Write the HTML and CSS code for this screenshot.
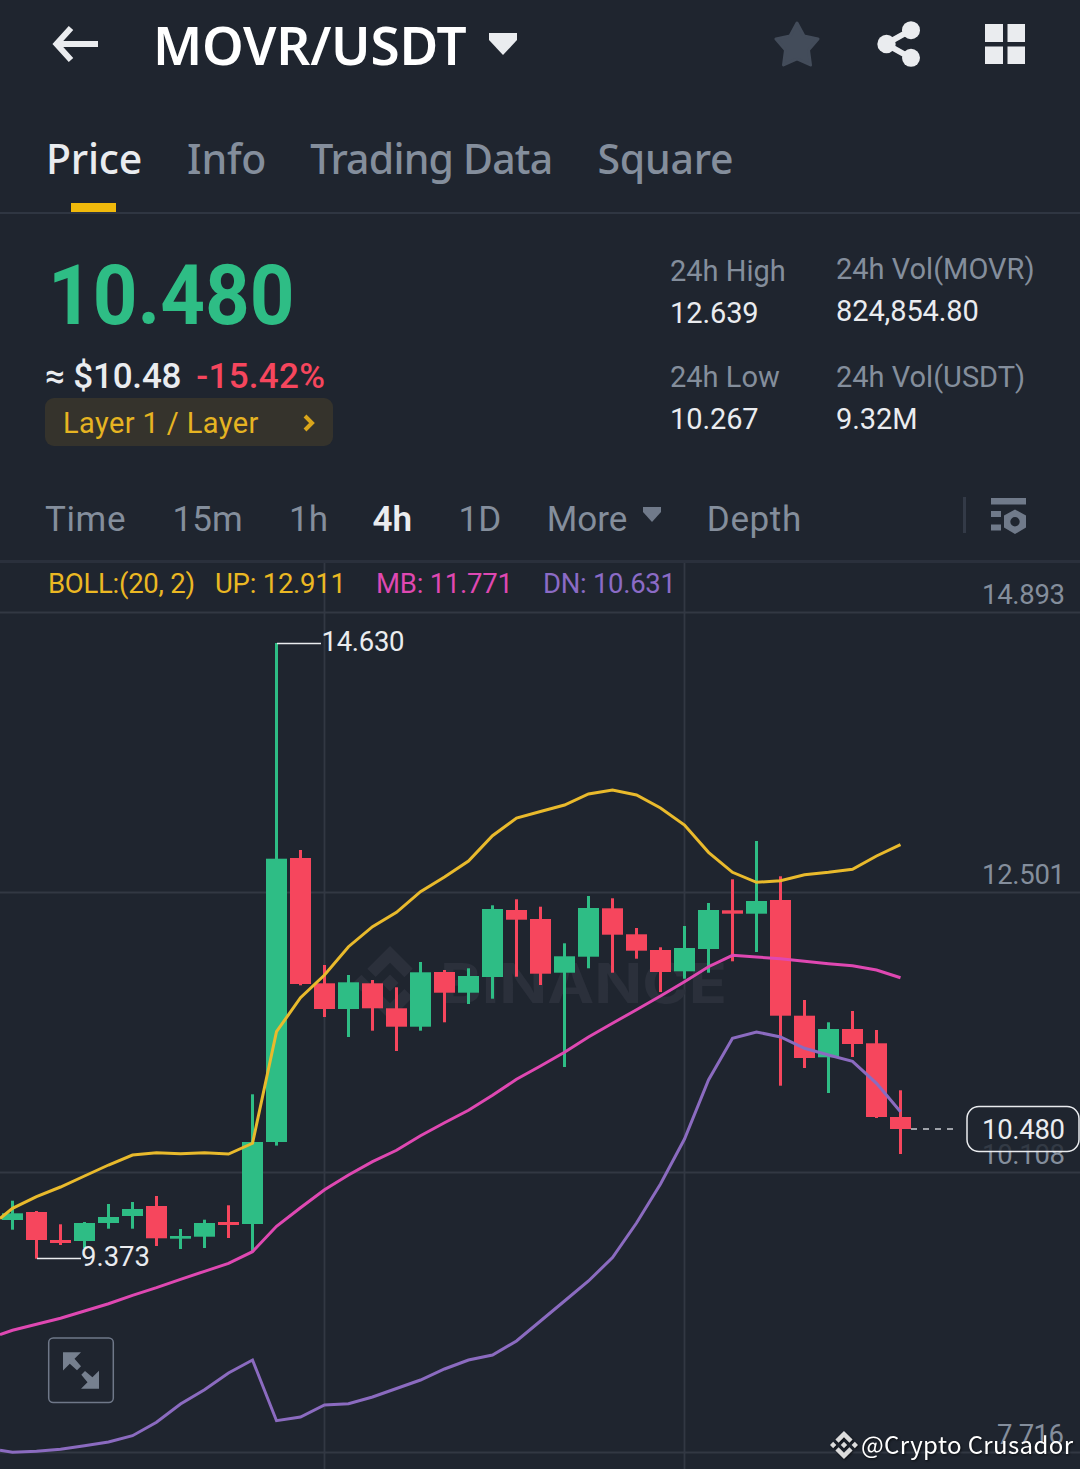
FILE: index.html
```html
<!DOCTYPE html>
<html lang="en">
<head>
    <meta charset="UTF-8">
    <meta name="viewport" content="width=device-width, initial-scale=1.0">
    <title>MOVR/USDT</title>
    <link rel="stylesheet" href="styles.css">
</head>
<body>
    <header class="header">
        <svg class="back" width="48" height="40" viewBox="0 0 48 40">
            <path d="M21 4 L6.500 20 L21 36 M6 20 H48" fill="none" stroke="#eaecef" stroke-width="6"/>
        </svg>
        <h1 class="title">MOVR/USDT</h1>
        <svg class="title-caret" width="28" height="22" viewBox="0 0 28 22">
            <path d="M0 0H28V7L14 22L0 7Z" fill="#eaecef"/>
        </svg>
        <div class="header-actions">
            <svg width="46" height="46" viewBox="0 0 46 46">
                <path d="M23 2 L30 15 L44 18 L34.500 29 L36.500 44 L23 38 L9.500 44 L11.500 29 L2 18 L16 15 Z" fill="#434c5a" stroke="#434c5a" stroke-width="3" stroke-linejoin="round"/>
            </svg>
            <svg width="44" height="46" viewBox="0 0 44 46">
                <path d="M34 9 L9 23 L34 37" fill="none" stroke="#eaecef" stroke-width="6"/>
                <circle cx="9.500" cy="23" r="9.200" fill="#eaecef"/>
                <circle cx="34" cy="9.200" r="9" fill="#eaecef"/>
                <circle cx="34" cy="36.800" r="9" fill="#eaecef"/>
            </svg>
            <svg width="40" height="40" viewBox="0 0 40 40">
                <path d="M0 0h18v18H0zM22.500 0H40v18H22.500zM0 22.500h18V40H0zM22.500 22.500H40V40H22.500z" fill="#eaecef"/>
            </svg>
        </div>
    </header>

    <nav class="tabs">
        <a class="tab active">Price</a>
        <a class="tab">Info</a>
        <a class="tab trading">Trading Data</a>
        <a class="tab">Square</a>
    </nav>

    <section class="summary">
        <div class="price-block">
            <div class="price">10.480</div>
            <div class="price-sub"><span class="usd">≈ $10.48</span><span class="change">-15.42%</span></div>
            <div class="badge">
                <span>Layer 1 / Layer</span>
                <svg width="12" height="18" viewBox="0 0 12 18"><path d="M2 2L9 9L2 16" fill="none" stroke="#d9a51b" stroke-width="4"/></svg>
            </div>
        </div>
        <div class="stats">
            <div class="stat-col">
                <div class="stat"><span class="label">24h High</span><span class="value">12.639</span></div>
                <div class="stat"><span class="label">24h Low</span><span class="value">10.267</span></div>
            </div>
            <div class="stat-col second">
                <div class="stat"><span class="label">24h Vol(MOVR)</span><span class="value">824,854.80</span></div>
                <div class="stat"><span class="label">24h Vol(USDT)</span><span class="value">9.32M</span></div>
            </div>
        </div>
    </section>

    <nav class="intervals">
        <a class="time">Time</a>
        <a>15m</a>
        <a>1h</a>
        <a class="active">4h</a>
        <a>1D</a>
        <a class="more">More
            <svg width="18" height="15" viewBox="0 0 18 15"><path d="M0 0H18V5L9 15L0 5Z" fill="#707a8a"/></svg>
        </a>
        <a>Depth</a>
        <div class="settings">
            <svg width="35" height="38" viewBox="0 0 35 38">
                <path d="M0 1h35v6.500H0zM0 14h10v6H0zM0 27.500h10v6H0z" fill="#707a8a"/>
                <path fill-rule="evenodd" d="M24 12.500l11 6v12l-11 6.500l-11-6.500v-12zM24 20a4.700 4.700 0 1 0 0 9.400a4.700 4.700 0 1 0 0-9.400z" fill="#707a8a"/>
            </svg>
        </div>
    </nav>

    <main class="chart">
        <svg width="1080" height="906" viewBox="0 563 1080 906">
            <defs>
                <path id="logo" d="M38.730 53.200 63.310 28.620 87.900 53.210l14.300-14.300L63.310 0 24.430 38.890zM0 63.310 14.300 49 28.600 63.300 14.300 77.600zM38.730 73.410 63.310 98l24.590-24.600 14.310 14.290-38.900 38.920-38.880-38.880zM98 63.310l14.300-14.300 14.310 14.300-14.310 14.300zM77.830 63.300 63.310 48.780 48.790 63.300 63.310 77.830z"/>
            </defs>

            <path class="grid" d="M0 612.500H1080M0 892.500H1080M0 1172.500H1080M0 1452.500H1080M324.500 563V1469M684.500 563V1469"/>

            <!-- watermark -->
            <g class="watermark">
                <use href="#logo" transform="translate(353 946) scale(.585)"/>
                <text x="440" y="1003" textLength="287" lengthAdjust="spacingAndGlyphs">BINANCE</text>
            </g>

            <g id="candles"></g>
            <g id="lines"></g>

            <text class="boll up" x="48" y="593" textLength="147">BOLL:(20, 2)</text>
            <text class="boll up" x="215" y="593" textLength="131">UP: 12.911</text>
            <text class="boll mb" x="376" y="593" textLength="137">MB: 11.771</text>
            <text class="boll dn" x="543" y="593" textLength="133">DN: 10.631</text>

            <!-- high / low markers -->
            <path class="marker" d="M277 643.500H321M37 1258.500H81"/>
            <text class="mark-text" x="321.500" y="651" textLength="83">14.630</text>
            <text class="mark-text" x="81" y="1265.500" textLength="69">9.373</text>

            <text class="axis" x="982" y="604" textLength="83">14.893</text>
            <text class="axis" x="982" y="884" textLength="83">12.501</text>
            <text class="axis" x="982" y="1163.500" textLength="83">10.108</text>
            <text class="axis" x="997" y="1443.500" textLength="67">7.716</text>

            <!-- current price -->
            <path class="last" d="M911 1129H954"/>
            <rect class="tag" x="967" y="1106.500" width="112" height="45" rx="12"/>
            <text class="mark-text" x="982" y="1139" textLength="83">10.480</text>

            <g class="expand">
                <rect x="48.700" y="1338" width="64.600" height="64.600" rx="4.500"/>
                <path d="M63 1352.300H81L74.500 1358.700L81 1366.200L77 1370.200L69.800 1363.700L63 1370.500ZM99 1388.700H81L87.500 1382.300L81.300 1374.800L85 1371L92.400 1377.300L99 1370.700Z"/>
            </g>

            <g class="author">
                <use href="#logo" transform="translate(830 1431) scale(.221)"/>
                <text x="861" y="1454" textLength="212">@Crypto Crusador</text>
            </g>
        </svg>
    </main>
    <script src="chart.js"></script>
</body>
</html>
```

FILE: styles.css
```css
* {
    box-sizing: border-box;
}

body {
    margin: 0;
    width: 1080px;
    height: 1469px;
    overflow: hidden;
    background-color: #1f252f;
    color: #eaecef;
    font-family: Roboto, "Liberation Sans", sans-serif;
}

svg {
    display: block;
    flex: none;
}

.header {
    display: flex;
    align-items: center;
    height: 88px;
    padding: 0 55px 0 50px;
}

.title {
    margin: 0 0 0 55px;
    padding-top: 1px;
    width: 318px;
    font-family: "Noto Sans", sans-serif;
    font-size: 53px;
    font-weight: 600;
    line-height: 72px;
    letter-spacing: -0.2px;
    color: #fff;
    white-space: nowrap;
}

.title-caret {
    margin-left: 18px;
}

.header-actions {
    display: flex;
    align-items: center;
    gap: 57px;
    margin-left: auto;
}

.header-actions svg:last-child {
    margin-left: 7px;
}

.tabs {
    display: flex;
    gap: 45px;
    height: 126px;
    padding: 15px 46px 0;
    border-bottom: 2px solid #2f3642;
}

.tab {
    position: relative;
    font-family: "Noto Sans", sans-serif;
    font-size: 41px;
    font-weight: 500;
    line-height: 110px;
    letter-spacing: -0.2px;
    color: #848e9c;
    white-space: nowrap;
}

.tab.trading {
    margin-left: -1px;
    letter-spacing: -0.8px;
}

.tab.active {
    color: #eaecef;
}

.tab.active::after {
    content: "";
    position: absolute;
    left: 25px;
    bottom: 0;
    width: 45px;
    height: 9px;
    background-color: #f0b90b;
}

.summary {
    display: flex;
    justify-content: space-between;
    height: 264px;
    padding: 36px 45px 0;
}

.price {
    margin: 1px 0 0 3px;
    font-size: 83px;
    font-weight: 700;
    line-height: 90px;
    color: #2ebd85;
    transform: scaleX(0.94);
    transform-origin: left;
}

.price-sub {
    display: flex;
    gap: 15px;
    margin-top: 14px;
    font-size: 35px;
    font-weight: 500;
    line-height: 44px;
    white-space: nowrap;
}

.usd {
    letter-spacing: -0.2px;
}

.change {
    letter-spacing: 0.3px;
    color: #f6465d;
}

.badge {
    display: flex;
    align-items: center;
    justify-content: space-between;
    width: 288px;
    height: 48px;
    margin-top: -1px;
    padding: 1px 18px 0;
    border-radius: 9px;
    background-color: #35332c;
    color: #e6b422;
    font-size: 29px;
    letter-spacing: 0.4px;
}

.stats {
    display: flex;
    width: 365px;
    font-size: 29px;
    line-height: 42px;
    white-space: nowrap;
}

.stat-col {
    display: flex;
    flex-direction: column;
    gap: 22px;
    width: 166px;
}

.stat-col.second {
    gap: 24px;
    margin-top: -2px;
}

.stat {
    display: flex;
    flex-direction: column;
}

.label {
    color: #848e9c;
}

.value {
    letter-spacing: -0.1px;
}

.intervals {
    display: flex;
    align-items: center;
    gap: 46.5px;
    height: 85px;
    padding: 0 54px 0 45px;
    border-bottom: 3px solid #2a303c;
    font-size: 35px;
    color: #848e9c;
}

.intervals .time {
    letter-spacing: 0.6px;
}

.intervals .active {
    margin-left: -2px;
    color: #eaecef;
    font-weight: 600;
}

.more {
    display: flex;
    align-items: center;
    gap: 16px;
    margin-left: -1px;
}

.more svg {
    margin-bottom: 9px;
}

.more + a {
    margin-left: -1px;
    letter-spacing: 0.6px;
}

.settings {
    display: flex;
    align-items: center;
    height: 36px;
    margin-left: auto;
    margin-bottom: 8px;
    padding-left: 25px;
    border-left: 3px solid #333a47;
}

.settings svg {
    margin-top: 2px;
}

.grid {
    fill: none;
    stroke: #323843;
    stroke-width: 1.8;
}

.watermark {
    fill: #2b303b;
}

.watermark text {
    font-family: Inter, sans-serif;
    font-size: 55px;
    font-weight: 700;
}

.boll,
.axis,
.mark-text {
    font-family: Roboto, sans-serif;
    font-size: 27.5px;
}

.up {
    fill: #ebb823;
}

.mb {
    fill: #df48b2;
}

.dn {
    fill: #8b6bc6;
}

.axis {
    fill: #848e9c;
}

.mark-text {
    fill: #eaecef;
}

.marker {
    stroke: #eaecef;
    stroke-width: 1.5;
}

.last {
    stroke: #c9ccd2;
    stroke-width: 1.5;
    stroke-dasharray: 6;
}

.tag {
    fill: #1f252f;
    fill-opacity: 0.8;
    stroke: #eaecef;
    stroke-width: 1.5;
}

.line {
    fill: none;
    stroke-width: 3;
}

.expand rect {
    fill: none;
    stroke: #6f7889;
    stroke-width: 1.5;
}

.expand path {
    fill: #76808f;
}

.author {
    fill: #dcdcdc;
    filter: drop-shadow(1px 1px 1px rgba(0, 0, 0, 0.6));
}

.author text {
    fill: #fff;
    font-family: "Noto Sans CJK SC", sans-serif;
    font-size: 24px;
    font-weight: 400;
}
```

FILE: chart.js
```javascript
const NS = 'http://www.w3.org/2000/svg';
const STEP = 24;
const FIRST = 12.5;

// [direction, body top, body bottom, wick top, wick bottom]
const candles = [
    ['g', 1213.3, 1220, 1200.7, 1229.7],
    ['r', 1212, 1240, 1211, 1258.7],
    ['r', 1240, 1243, 1224.3, 1245],
    ['g', 1223, 1241, 1222, 1248],
    ['g', 1217, 1223, 1204, 1228.7],
    ['g', 1209, 1216, 1202, 1228.7],
    ['r', 1206, 1238.3, 1196, 1246],
    ['g', 1236, 1238.7, 1229, 1249],
    ['g', 1223, 1236.7, 1219.7, 1248],
    ['r', 1222, 1225, 1205.3, 1238],
    ['g', 1142, 1224, 1094.3, 1252],
    ['g', 858.7, 1142, 643, 1145.6],
    ['r', 858, 984, 850, 985.3],
    ['r', 983.3, 1009, 965, 1017],
    ['g', 982.3, 1009, 975, 1037],
    ['r', 983.3, 1008.3, 980, 1030.7],
    ['r', 1008.3, 1026.7, 987.3, 1051],
    ['g', 972.3, 1026.7, 962, 1030.7],
    ['r', 972, 992.7, 970, 1022.3],
    ['g', 976, 992.7, 968.3, 1004],
    ['g', 909, 977, 905.3, 998.7],
    ['r', 910, 919.7, 899.3, 976.7],
    ['r', 919, 973.7, 906.7, 985],
    ['g', 956.3, 972.7, 943.3, 1067],
    ['g', 908, 956.7, 896, 968.3],
    ['r', 908.3, 934.7, 898.3, 972.7],
    ['r', 934.3, 950.7, 928, 958.7],
    ['r', 950, 972, 947.3, 992],
    ['g', 948, 971.3, 926, 978.7],
    ['g', 910, 949, 903, 972.7],
    ['r', 910.3, 913.7, 879.3, 961.3],
    ['g', 901, 913.7, 841, 952],
    ['r', 900, 1015.7, 876.3, 1085.7],
    ['r', 1015.7, 1058, 1000, 1068],
    ['g', 1029, 1057.3, 1022.3, 1093],
    ['r', 1029, 1044, 1011, 1057],
    ['r', 1043.3, 1117, 1030, 1118],
    ['r', 1117, 1129, 1090.3, 1154]
];

// the first value of each band sits on the left edge of the chart
const bands = {
    '#e9ba2c': [1218.5, 1208.3, 1196.7, 1187, 1176, 1165, 1155, 1152.7, 1153.7, 1152.7, 1154, 1143.3, 1031.7, 997.7, 975, 946.7, 926.7, 912.3, 891.7, 877, 861, 835.7, 818, 811.5, 805, 794, 790, 795, 808, 825, 852.3, 872.3, 882.3, 880.7, 874.7, 872.3, 869.3, 856, 844.7],
    '#df48b2': [1334.7, 1330.3, 1324.3, 1318.3, 1311, 1303.7, 1295.3, 1287.7, 1279.3, 1271.3, 1263.3, 1251.7, 1226.3, 1207.7, 1189.7, 1175, 1161.7, 1150.3, 1135.7, 1122.7, 1110.3, 1095.3, 1079.3, 1066, 1052.3, 1037, 1023.3, 1009.7, 996, 981.7, 966.7, 955.3, 957, 958.7, 961.3, 963.7, 965.7, 970, 977.7],
    '#8b6bc0': [1450.3, 1452.3, 1451.3, 1449.3, 1445.7, 1442, 1435.7, 1422.3, 1404, 1389.7, 1373, 1360, 1420.7, 1417, 1405, 1403.7, 1397, 1388.5, 1380, 1369, 1360, 1355, 1341, 1321, 1301, 1281, 1257.5, 1223, 1184, 1139, 1080, 1038.3, 1032, 1037, 1048.3, 1055, 1061.3, 1083.3, 1111.7]
};

function addRect(x, y, width, height, fill) {
    const rect = document.createElementNS(NS, 'rect');
    rect.setAttribute('x', x);
    rect.setAttribute('y', y);
    rect.setAttribute('width', width);
    rect.setAttribute('height', height);
    rect.setAttribute('fill', fill);
    document.getElementById('candles').appendChild(rect);
}

candles.forEach(([dir, top, bottom, high, low], i) => {
    const x = FIRST + i * STEP;
    const color = dir === 'g' ? '#2ebd85' : '#f6465d';
    addRect(x - 1.5, high, 3, low - high, color);
    addRect(x - 10.5, top, 21, bottom - top, color);
});

Object.entries(bands).forEach(([color, values]) => {
    const points = values.map((y, i) => `${i === 0 ? 0 : FIRST + (i - 1) * STEP},${y}`);
    const line = document.createElementNS(NS, 'polyline');
    line.setAttribute('class', 'line');
    line.setAttribute('points', points.join(' '));
    line.setAttribute('stroke', color);
    document.getElementById('lines').appendChild(line);
});
```
